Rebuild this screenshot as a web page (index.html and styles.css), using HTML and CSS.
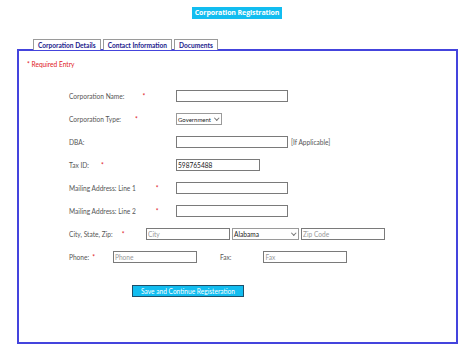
FILE: index.html
```html
<!DOCTYPE html>
<html lang="en">
<head>
  <meta charset="UTF-8">
  <title>Corporation Registration</title>
  <link rel="stylesheet" href="styles.css">
</head>
<body>

  <div class="title-wrap">
    <h1 class="title">Corporation Registration</h1>
  </div>

  <div class="tabs">
    <span class="tab active">Corporation Details</span>
    <span class="tab">Contact Information</span>
    <span class="tab">Documents</span>
  </div>

  <div class="panel">
    <div class="required">* Required Entry</div>

    <div class="form">
      <div class="row">
        <div class="label-cell"><span class="label">Corporation Name:</span><span class="star s18">*</span></div>
        <input type="text" class="field wide">
      </div>

      <div class="row">
        <div class="label-cell"><span class="label">Corporation Type:</span><span class="star s14">*</span></div>
        <div class="select gov">Government <span class="chev"></span></div>
      </div>

      <div class="row">
        <div class="label-cell"><span class="label">DBA:</span></div>
        <input type="text" class="field wide">
        <span class="note">[If Applicable]</span>
      </div>

      <div class="row">
        <div class="label-cell"><span class="label">Tax ID:</span><span class="star s12">*</span></div>
        <input type="text" class="field mid" value="598765488">
      </div>

      <div class="row">
        <div class="label-cell"><span class="label">Mailing Address: Line 1</span><span class="star s20">*</span></div>
        <input type="text" class="field wide">
      </div>

      <div class="row">
        <div class="label-cell"><span class="label">Mailing Address: Line 2</span><span class="star s20">*</span></div>
        <input type="text" class="field wide">
      </div>

      <div class="row">
        <div class="label-cell short-city"><span class="label">City, State, Zip:</span><span class="star s9">*</span></div>
        <input type="text" class="field mid" placeholder="City">
        <div class="select state">Alabama <span class="chev"></span></div>
        <input type="text" class="field mid" placeholder="Zip Code">
      </div>

      <div class="row">
        <div class="label-cell short-phone"><span class="label">Phone:</span><span class="star s3">*</span></div>
        <input type="text" class="field mid" placeholder="Phone">
        <span class="label fax-label">Fax:</span>
        <input type="text" class="field mid" placeholder="Fax">
      </div>

      <div class="actions">
        <button class="btn">Save and Continue Registeration</button>
      </div>
    </div>
  </div>

</body>
</html>
```

FILE: styles.css
```css
body {
  margin: 0;
  background-color: #ffffff;
  font-family: Lato, "Open Sans", sans-serif;
  font-size: 6.6px;
  color: #333333;
}
.title-wrap {
  text-align: center;
  padding-top: 7px;
}
.title {
  display: inline-block;
  margin: 0;
  padding: 1px 3px;
  background-color: #12bdf0;
  color: #ffffff;
  font-family: "Open Sans", sans-serif;
  font-size: 7px;
  font-weight: bold;
  line-height: 10px;
  letter-spacing: -0.1px;
}
.tabs {
  display: flex;
  gap: 2px;
  margin: 20px 0 0 33px;
  position: relative;
  z-index: 1;
}
.tab {
  border: 1px solid #9a9a9a;
  border-bottom: none;
  background-color: #ffffff;
  color: #1a1a8c;
  font-weight: bold;
  font-size: 6.6px;
  line-height: 10px;
  padding: 0 4px;
}
.panel {
  margin: -1px 16px 0 17px;
  border: 2px solid #4444dd;
  height: 295px;
  box-sizing: border-box;
}
.required {
  color: #e0201e;
  margin: 8px 0 0 8px;
  line-height: 10px;
}
.form {
  padding: 21px 0 0 50px;
}
.row {
  display: flex;
  align-items: center;
  height: 12px;
  margin-bottom: 11px;
}
.label-cell {
  width: 107px;
  display: flex;
  align-items: center;
}
.label-cell.short-city {
  width: 77px;
}
.label-cell.short-phone {
  width: 44px;
}
.label {
  color: #555555;
}
.star {
  color: #e0201e;
}
.s3 { margin-left: 3px; }
.s9 { margin-left: 9px; }
.s12 { margin-left: 12px; }
.s14 { margin-left: 14px; }
.s18 { margin-left: 18px; }
.s20 { margin-left: 20px; }
.field {
  box-sizing: border-box;
  height: 12px;
  border: 1px solid #7a7a7a;
  padding: 0 1px;
  font-family: inherit;
  font-size: 6.6px;
  color: #222222;
  margin: 0;
}
.field::placeholder {
  color: #999999;
}
.field.wide {
  width: 112px;
}
.field.mid {
  width: 84px;
}
.note {
  margin-left: 3px;
  color: #555555;
}
.select {
  box-sizing: border-box;
  height: 12px;
  border: 1px solid #9a9a9a;
  display: flex;
  align-items: center;
  justify-content: space-between;
  padding: 0 3px 0 1px;
  color: #222222;
}
.select.gov {
  width: 46px;
  font-size: 6px;
}
.select.state {
  width: 67px;
  margin: 0 2px;
}
.chev {
  width: 2.5px;
  height: 2.5px;
  border-right: 1px solid #777777;
  border-bottom: 1px solid #777777;
  transform: rotate(45deg);
  margin-top: -2px;
  flex-shrink: 0;
}
.fax-label {
  margin: 0 32px 0 23px;
}
.actions {
  padding: 11px 0 0 63px;
}
.btn {
  width: 112px;
  height: 12px;
  padding: 0;
  background-color: #12bdf0;
  border: 1px solid #1d4f6a;
  color: #ffffff;
  font-family: inherit;
  font-size: 6.6px;
  cursor: pointer;
}
```
